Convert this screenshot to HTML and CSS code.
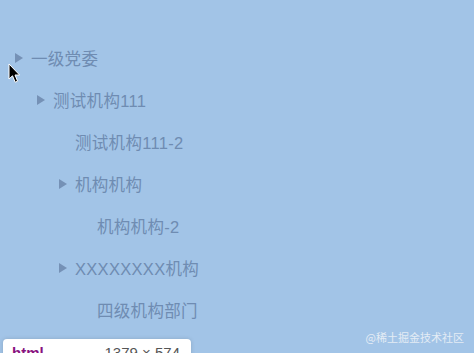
FILE: index.html
```html
<!DOCTYPE html>
<html lang="zh">
<head>
    <meta charset="UTF-8">
    <meta name="viewport" content="width=device-width, initial-scale=1.0">
    <title>Tree</title>
    <link rel="stylesheet" href="styles.css">
</head>
<body>
    <ul class="tree">
        <li class="node lv0"><span class="arrow"></span><span class="label">一级党委</span></li>
        <li class="node lv1"><span class="arrow"></span><span class="label">测试机构111</span></li>
        <li class="node lv2"><span class="arrow blank"></span><span class="label">测试机构111-2</span></li>
        <li class="node lv2"><span class="arrow"></span><span class="label">机构机构</span></li>
        <li class="node lv3"><span class="arrow blank"></span><span class="label">机构机构-2</span></li>
        <li class="node lv2"><span class="arrow"></span><span class="label">XXXXXXXX机构</span></li>
        <li class="node lv3"><span class="arrow blank"></span><span class="label">四级机构部门</span></li>
    </ul>

    <svg class="cursor" width="13" height="21" viewBox="0 0 13 21" xmlns="http://www.w3.org/2000/svg">
        <path d="M1 1 L1 16 L4.5 12.8 L7.2 19.2 L9.6 18.2 L7 12 L11.6 12 Z" fill="#000" stroke="#fff" stroke-width="1"/>
    </svg>

    <div class="tip"><span class="tag">html</span><span class="size">1379 × 574</span></div>
    <div class="mark">@稀土掘金技术社区</div>
</body>
</html>
```

FILE: styles.css
```css
body {
    margin: 0;
    padding: 0;
    width: 474px;
    height: 353px;
    overflow: hidden;
    background-color: #a2c4e7;
    font-family: 'Liberation Sans', 'Noto Sans CJK SC', sans-serif;
    position: relative;
}

.tree {
    list-style: none;
    margin: 0;
    padding: 37px 0 0 0;
}

.node {
    display: flex;
    align-items: center;
    height: 42px;
    color: #6f8cb2;
    font-size: 16.5px;
}

.lv0 { padding-left: 15px; }
.lv1 { padding-left: 37px; }
.lv2 { padding-left: 59px; }
.lv3 { padding-left: 81px; }

.arrow {
    width: 0;
    height: 0;
    border-top: 5px solid transparent;
    border-bottom: 5px solid transparent;
    border-left: 8px solid #7591b6;
    margin-right: 8px;
}

.arrow.blank {
    border-left-color: transparent;
}

.label {
    letter-spacing: 0.3px;
}

.cursor {
    position: absolute;
    left: 8px;
    top: 63px;
}

.tip {
    position: absolute;
    left: 3px;
    top: 339px;
    width: 168px;
    height: 30px;
    padding: 5px 11px 0 9px;
    background: #fff;
    border-radius: 4px;
    box-shadow: 0 0 4px rgba(0, 0, 0, 0.15);
    display: flex;
    justify-content: space-between;
    font-size: 15px;
    line-height: 17px;
}

.tag {
    color: #881280;
    font-weight: bold;
}

.size {
    color: #555;
}

.mark {
    position: absolute;
    right: 10px;
    top: 329px;
    color: #e4ecf5;
    font-size: 11px;
    font-family: 'Noto Sans CJK SC', sans-serif;
}
```
